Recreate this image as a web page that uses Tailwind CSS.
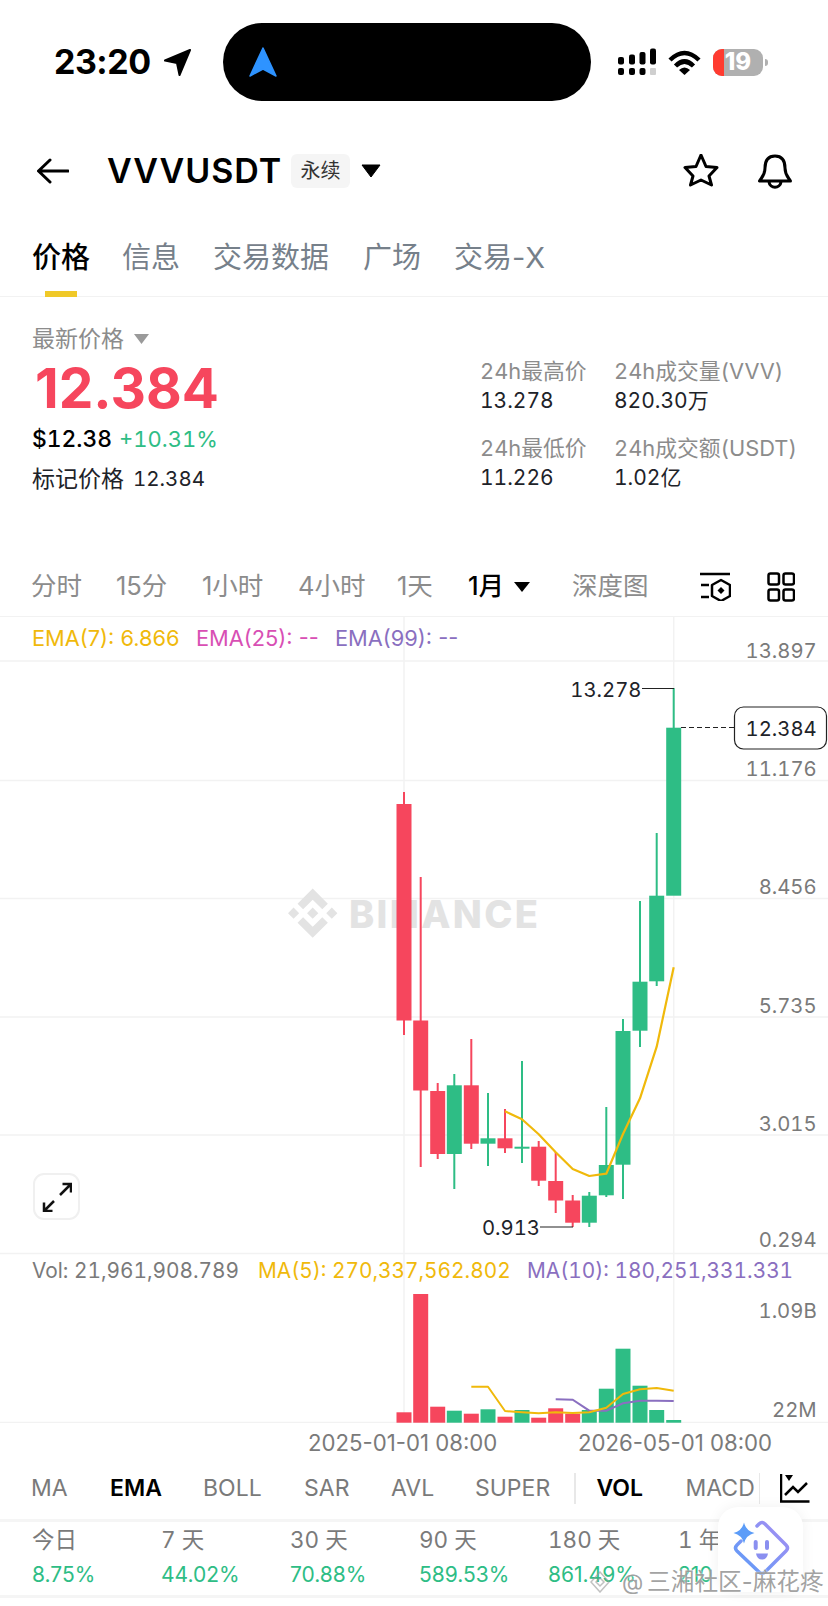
<!DOCTYPE html>
<html lang="zh">

<head>
    <meta charset="UTF-8">
    <meta name="viewport" content="width=device-width, initial-scale=1.0">
    <title>VVVUSDT</title>
    <script src="https://cdn.jsdelivr.net/npm/@tailwindcss/browser@4"></script>
</head>

<body class="bg-white text-[#1e2329] font-[Inter,'Noto_Sans_CJK_SC',sans-serif]">
<div class="relative w-[828px] h-[1606px] overflow-hidden bg-white">

    <!-- Status bar -->
    <div class="flex items-center h-[78px] mt-[23px] pl-[54px] text-black">
        <span class="w-[110px] text-[34px] leading-none font-bold tracking-[-0.5px]">23:20</span>
        <svg class="w-[27px] h-[27px]" viewBox="164 49 27 27" fill="currentColor" stroke="currentColor" stroke-width="2" stroke-linejoin="round"><path d="M190 50 L165 60.5 L177 63 L179.5 75 Z"/></svg>
        <div class="ml-[32px] w-[368px] h-[78px] rounded-[39px] bg-black flex items-center pl-[26px]">
            <svg class="w-[28px] h-[30px]" viewBox="249 46 28 30" fill="#2e93ff" stroke="#2e93ff" stroke-width="1.5" stroke-linejoin="round"><path d="M263 47 L250 75 L263 68 L276 75 Z"/></svg>
        </div>
        <svg class="ml-[27px] w-[38px] h-[28px]" viewBox="618 48 38 28">
            <rect x="618" y="57" width="6" height="7.5" rx="2"/><rect x="629" y="54.5" width="6" height="10" rx="2"/><rect x="639.5" y="52" width="6" height="12.5" rx="2"/><rect x="650" y="48.5" width="6" height="16" rx="2"/>
            <rect x="618" y="68" width="6" height="7" rx="2"/><rect x="629" y="68" width="6" height="7" rx="2"/><rect x="639.5" y="68" width="6" height="7" rx="2"/><rect x="650" y="68" width="6" height="7" rx="1" fill="#cfcfcf"/>
        </svg>
        <svg class="ml-[12px] w-[33px] h-[28px]" viewBox="668 47 33 28" fill="none" stroke="#000" stroke-width="4.5">
            <path d="M670 59 Q684.5 45 699 59"/><path d="M675.5 65 Q684.5 56 693.5 65"/>
            <path d="M679 69 Q684.5 64 690 69 L684.5 74 Z" fill="#000" stroke="none"/>
        </svg>
        <div class="ml-[12px] relative w-[50px] h-[27px] rounded-[9px] bg-[#b0b0b0] overflow-hidden flex items-center justify-center">
            <div class="absolute left-0 top-0 bottom-0 w-[11px] bg-[#ff3b30]"></div>
            <span class="relative text-white text-[24px] leading-none font-extrabold">19</span>
        </div>
        <div class="ml-[2px] w-[3px] h-[7px] rounded-r-full bg-[#b0b0b0]"></div>
    </div>

    <!-- Nav -->
    <div class="flex items-center h-[36px] mt-[52px] pl-[37px]">
        <svg class="w-[32px] h-[26px]" viewBox="37 158 32 26" fill="none" stroke="#000" stroke-width="3" stroke-linecap="round" stroke-linejoin="round"><path d="M68 171 H39 M50 160 L38.5 171 L50 182"/></svg>
        <span class="ml-[38px] w-[184px] text-[34px] leading-none font-semibold tracking-[1px] text-black">VVVUSDT</span>
        <span class="w-[59px] h-[34px] rounded-md bg-[#f5f5f5] text-[20px] leading-[34px] text-center text-[#333]">永续</span>
        <svg class="ml-[11px] w-[20px] h-[14px]" viewBox="0 0 20 14"><path d="M1 1 H19 L10 13 Z" fill="#000" stroke="#000" stroke-linejoin="round"/></svg>
        <svg class="ml-[302px] w-[36px] h-[35px]" viewBox="684 155 36 35" fill="none" stroke="#000" stroke-width="3" stroke-linejoin="round"><path d="M702 156 L707 167.5 L718 168.5 L710 177 L712.5 186 L702 181 L691.5 186 L694 177 L686 168.5 L697 167.5 Z"/></svg>
        <svg class="ml-[38px] w-[36px] h-[36px]" viewBox="757 152 36 36" fill="none" stroke="#000" stroke-width="3" stroke-linejoin="round" stroke-linecap="round"><path d="M775 155 C767 155 765 161 765 167 C765 174 762 176 759.5 180 H790.5 C788 176 785 174 785 167 C785 161 783 155 775 155 Z M769 181 C770 188 780 188 781 181"/></svg>
    </div>

    <!-- Tabs -->
    <div class="flex items-start h-[108px] pt-[51px] pl-[32px] border-b border-[#f2f2f2] text-[29px] leading-[36px] text-[#76808a]">
        <div class="w-[90px] flex flex-col items-start">
            <span class="font-medium text-black">价格</span>
            <div class="ml-[13px] mt-[15px] w-[32px] h-[6px] bg-[#f0c928]"></div>
        </div>
        <span class="w-[91px]">信息</span>
        <span class="w-[150px]">交易数据</span>
        <span class="w-[91px]">广场</span>
        <span>交易-X</span>
    </div>

    <!-- Price info -->
    <div class="flex h-[263px] tabular-nums">
        <div class="w-[480px] pl-[32px] pt-[27px]">
            <div class="flex items-center h-[30px] text-[23px] text-[#8c8c8c]">
                最新价格
                <svg class="ml-[10px] w-[15px] h-[10px]" viewBox="0 0 15 10"><path d="M0 0 H15 L7.5 10 Z" fill="#9a9a9a"/></svg>
            </div>
            <div class="mt-[6px] ml-[3px] h-[56px] text-[55px] leading-[56px] font-bold text-[#f6465d] [font-variant-numeric:normal]">12.384</div>
            <div class="mt-[8px] h-[30px] flex items-center gap-[7px]">
                <span class="text-[22.8px] font-medium text-black">$12.38</span>
                <span class="text-[22px] text-[#2ebd85]">+10.31%</span>
            </div>
            <div class="mt-[10px] h-[30px] flex items-center gap-[9px] text-[23px] text-[#1e2329]">
                <span>标记价格</span><span class="text-[20.5px]">12.384</span>
            </div>
        </div>
        <div class="pt-[59px] grid grid-cols-[134px_1fr] content-start text-[21px] leading-[30px] text-[#1e2329]">
            <span class="text-[21.8px] text-[#8c8c8c]">24h最高价</span><span class="text-[21.8px] text-[#8c8c8c]">24h成交量(VVV)</span>
            <span>13.278</span><span>820.30万</span>
            <span class="mt-[17px] text-[21.8px] text-[#8c8c8c]">24h最低价</span><span class="mt-[17px] text-[21.8px] text-[#8c8c8c]">24h成交额(USDT)</span>
            <span>11.226</span><span>1.02亿</span>
        </div>
    </div>

    <!-- Time frames -->
    <div class="flex items-center h-[57px] pl-[31px] pb-[3px] text-[25.5px] text-[#8c8c8c] border-b border-[#f2f2f2]">
        <span class="w-[85px]">分时</span>
        <span class="w-[86px]">15分</span>
        <span class="w-[96px]">1小时</span>
        <span class="w-[99px]">4小时</span>
        <span class="w-[71px]">1天</span>
        <span class="w-[104px] flex items-center font-medium text-black">1月
            <svg class="ml-[10px] w-[16px] h-[10px]" viewBox="0 0 16 10"><path d="M0 0 H16 L8 10 Z" fill="#000"/></svg>
        </span>
        <span class="w-[128px]">深度图</span>
        <svg class="w-[31px] h-[29px] mr-[36px]" viewBox="699 572 31 29" fill="none" stroke="#000" stroke-width="2.5">
            <path d="M699 574 H729 M700 585 H708 M700 597 H708"/>
            <path d="M720 580 L729 585 V596 L720 601 L711 596 V585 Z" stroke-linejoin="round"/>
            <path d="M720 587 L723.5 590.5 L720 594 L716.5 590.5 Z" fill="#000" stroke="none"/>
        </svg>
        <svg class="w-[28px] h-[30px]" viewBox="765.5 570.5 28 30" fill="none" stroke="#000" stroke-width="2.5">
            <rect x="767" y="572" width="10.5" height="11" rx="2"/><rect x="782" y="572" width="10.5" height="11" rx="2"/>
            <rect x="767" y="588" width="10.5" height="11" rx="2"/><rect x="782" y="588" width="10.5" height="11" rx="2"/>
        </svg>
    </div>

    <!-- Chart -->
    <div class="relative h-[806px]">
        <svg class="absolute left-0 top-0 w-[828px] h-[806px] tabular-nums" viewBox="0 617 828 806">
            <g stroke="#f2f2f2" stroke-width="1.5">
                <path d="M0 661 H828 M0 780.5 H828 M0 898.5 H828 M0 1017 H828 M0 1135 H828 M0 1253.5 H828 M0 1422.5 H828"/>
                <path d="M404 617 V1423 M673.7 617 V1423"/>
            </g>

            <!-- watermark -->
            <g fill="#e3e3e3">
                <g transform="translate(288 888.5) scale(.39)">
                    <path d="M38.73 53.2l24.59-24.58 24.6 24.6 14.3-14.31L63.32 0 24.43 38.89z"/>
                    <path d="M0 63.31l14.3-14.31 14.31 14.31-14.31 14.3z"/>
                    <path d="M38.73 73.41l24.59 24.59 24.6-24.6 14.31 14.29-38.9 38.91-38.91-38.88z"/>
                    <path d="M98 63.31l14.3-14.31 14.31 14.31-14.31 14.3z"/>
                    <path d="M77.83 63.3L63.32 48.78 52.59 59.51l-1.24 1.23-2.54 2.54 14.51 14.5 14.51-14.47z"/>
                </g>
                <text x="349" y="928" font-size="38" font-weight="800" textLength="189">BINANCE</text>
            </g>

            <!-- candles -->
            <g fill="#f6465d">
                <rect x="403" y="792" width="2" height="243"/><rect x="396.5" y="804" width="15" height="216.5"/>
                <rect x="419.7" y="877" width="2" height="290"/><rect x="413.2" y="1020.5" width="15" height="70"/>
                <rect x="436.7" y="1083" width="2" height="76"/><rect x="430.2" y="1091" width="15" height="63"/>
                <rect x="470.3" y="1039" width="2" height="110"/><rect x="463.8" y="1085.3" width="15" height="58.4"/>
                <rect x="504" y="1109" width="2" height="44"/><rect x="497.5" y="1138.3" width="15" height="10"/>
                <rect x="537.7" y="1141" width="2" height="45"/><rect x="531.2" y="1146.7" width="15" height="34"/>
                <rect x="554.7" y="1152" width="2" height="61"/><rect x="548.2" y="1181" width="15" height="19.5"/>
                <rect x="571.7" y="1195" width="2" height="32"/><rect x="565.2" y="1200.5" width="15" height="22.2"/>
            </g>
            <g fill="#2ebd85">
                <rect x="453.3" y="1074" width="2" height="115"/><rect x="446.8" y="1085.3" width="15" height="68.7"/>
                <rect x="487" y="1093" width="2" height="73"/><rect x="480.5" y="1138.3" width="15" height="5.4"/>
                <rect x="521" y="1061" width="2" height="102"/><rect x="514.5" y="1146.7" width="15" height="2"/>
                <rect x="588.3" y="1192" width="2" height="35"/><rect x="581.8" y="1195.7" width="15" height="27"/>
                <rect x="605.3" y="1107" width="2" height="90"/><rect x="598.8" y="1165" width="15" height="30.3"/>
                <rect x="622" y="1019" width="2" height="180"/><rect x="615.5" y="1031" width="15" height="133.7"/>
                <rect x="639" y="901" width="2" height="146"/><rect x="632.5" y="981.7" width="15" height="49"/>
                <rect x="655.7" y="833" width="2" height="153"/><rect x="649.2" y="895.7" width="15" height="85.6"/>
                <rect x="672.7" y="688" width="2" height="40"/><rect x="666.2" y="727.7" width="15" height="168"/>
            </g>

            <!-- EMA(7) -->
            <polyline fill="none" stroke="#f0b90b" stroke-width="2.2" stroke-linejoin="round" points="505,1111.3 522,1119.3 538.7,1134.3 555.7,1152.3 572.7,1169 589.3,1176 606.3,1173.7 623,1134 640,1098.3 656.7,1046.7 673.7,967.3"/>

            <!-- high, low and last price -->
            <path d="M642 688.5 H674 M540 1227 H573" fill="none" stroke="#222" stroke-width="1.2"/>
            <path d="M681 727.5 H734" fill="none" stroke="#222" stroke-width="1.2" stroke-dasharray="5 3"/>
            <rect x="734.5" y="707" width="92" height="42" rx="9" fill="#fff" stroke="#222" stroke-width="1.2"/>
            <g font-size="20.3" fill="#1e2329">
                <text x="641.5" y="696.7" text-anchor="end">13.278</text>
                <text x="540" y="1235" text-anchor="end">0.913</text>
                <text x="816.7" y="736" text-anchor="end">12.384</text>
            </g>

            <!-- axis labels -->
            <g font-size="20.3" fill="#7a7a7a" text-anchor="end">
                <text x="816.7" y="658">13.897</text>
                <text x="816.7" y="776">11.176</text>
                <text x="816.7" y="894">8.456</text>
                <text x="816.7" y="1012.7">5.735</text>
                <text x="816.7" y="1131">3.015</text>
                <text x="816.7" y="1247">0.294</text>
                <text x="816.7" y="1318">1.09B</text>
                <text x="816.7" y="1416.7">22M</text>
            </g>

            <!-- volume -->
            <g fill="#f6465d">
                <rect x="396.5" y="1412.3" width="15" height="10.4"/>
                <rect x="413.2" y="1294" width="15" height="128.7"/>
                <rect x="430.2" y="1406.7" width="15" height="16"/>
                <rect x="463.8" y="1413.7" width="15" height="9"/>
                <rect x="497.5" y="1416.7" width="15" height="6"/>
                <rect x="531.2" y="1417.7" width="15" height="5"/>
                <rect x="548.2" y="1408.3" width="15" height="14.4"/>
                <rect x="565.2" y="1413.7" width="15" height="9"/>
            </g>
            <g fill="#2ebd85">
                <rect x="446.8" y="1410.7" width="15" height="12"/>
                <rect x="480.5" y="1409.3" width="15" height="13.4"/>
                <rect x="514.5" y="1410" width="15" height="12.7"/>
                <rect x="581.8" y="1410" width="15" height="12.7"/>
                <rect x="598.8" y="1388.7" width="15" height="34"/>
                <rect x="615.5" y="1348.7" width="15" height="74"/>
                <rect x="632.5" y="1385.7" width="15" height="37"/>
                <rect x="649.2" y="1410" width="15" height="12.7"/>
                <rect x="666.2" y="1420" width="15" height="2.7"/>
            </g>
            <polyline fill="none" stroke="#8a6fc0" stroke-width="2" points="555.7,1399.3 572.7,1399.7 589.3,1410.7 606.3,1410.7 623,1403.3 640,1400.7 656.7,1400.7 673.7,1401"/>
            <polyline fill="none" stroke="#f0b90b" stroke-width="2" stroke-linejoin="round" points="471.3,1386.7 488,1386.7 505,1411 522,1412.3 538.7,1413.3 555.7,1412.3 572.7,1413 589.3,1412.3 606.3,1407.7 623,1394 640,1389.3 656.7,1388 673.7,1390.7"/>
        </svg>

        <div class="relative flex items-center h-[42px] pl-[32px] text-[21.8px]">
            <span class="w-[164px] text-[#f0b90b]">EMA(7): 6.866</span>
            <span class="w-[139px] text-[#d84fb4]">EMA(25): --</span>
            <span class="text-[#8a6fc0]">EMA(99): --</span>
        </div>
        <div class="h-[591px]"></div>
        <div class="relative flex items-center h-[42px] pl-[32px] text-[20.8px] tabular-nums">
            <span class="w-[226px] text-[#7a7a7a]">Vol: 21,961,908.789</span>
            <span class="w-[269px] text-[#f0b90b]">MA(5): 270,337,562.802</span>
            <span class="text-[#8a6fc0]">MA(10): 180,251,331.331</span>
        </div>

        <!-- expand -->
        <div class="absolute left-[33px] top-[556px] w-[47px] h-[47px] rounded-[11px] bg-white border-2 border-[#f0f0f0] flex items-center justify-center">
            <svg class="w-[30px] h-[30px]" viewBox="42 1181 30 30" fill="none" stroke="#111" stroke-width="2.5"><path d="M60 1194 L70.5 1183.5 M62.5 1183 H71 V1191.5 M54 1200 L44.5 1209.5 M44 1201.5 V1210 H52.5"/></svg>
        </div>
    </div>

    <!-- Dates -->
    <div class="flex items-center h-[40px] pl-[308px] text-[22.2px] text-[#7a7a7a]">
        <span class="w-[270px]">2025-01-01 08:00</span>
        <span>2026-05-01 08:00</span>
    </div>

    <!-- Indicators -->
    <div class="flex items-center h-[50px] mb-[6px] pl-[31px] text-[23px] text-[#7a7a7a]">
        <span class="w-[79px]">MA</span>
        <span class="w-[93px] font-semibold text-black">EMA</span>
        <span class="w-[101px]">BOLL</span>
        <span class="w-[87px]">SAR</span>
        <span class="w-[84px]">AVL</span>
        <span class="w-[99px]">SUPER</span>
        <div class="w-[1.5px] h-[31px] bg-[#e8e8e8] mr-[21px]"></div>
        <span class="w-[89px] font-semibold text-black">VOL</span>
        <span class="w-[73px]">MACD</span>
        <div class="w-[1.5px] h-[31px] bg-[#e8e8e8] mr-[20px]"></div>
        <svg class="w-[30px] h-[30px]" viewBox="780 1473 30 30" fill="none" stroke="#000" stroke-width="2.5">
            <path d="M781 1474 V1501.5 H809.5"/>
            <path d="M785 1495 L793 1487 L798 1492 L807 1483"/>
            <path d="M785 1475 H793 L789 1481 Z" fill="#000" stroke="none"/>
        </svg>
    </div>

    <!-- Returns -->
    <div class="grid grid-cols-[129px_129px_129px_129px_130px_1fr] h-[79px] pl-[32px] border-t-[3px] border-b-[3px] border-[#f5f5f5] leading-[35px]">
        <div class="flex flex-col text-[22.5px] text-[#7a7a7a]"><span class="tabular-nums">今日</span><span class="text-[21px] text-[#2ebd85]">8.75%</span></div>
        <div class="flex flex-col text-[22.5px] text-[#7a7a7a]"><span class="tabular-nums">7 天</span><span class="text-[21px] text-[#2ebd85]">44.02%</span></div>
        <div class="flex flex-col text-[22.5px] text-[#7a7a7a]"><span class="tabular-nums">30 天</span><span class="text-[21px] text-[#2ebd85]">70.88%</span></div>
        <div class="flex flex-col text-[22.5px] text-[#7a7a7a]"><span class="tabular-nums">90 天</span><span class="text-[21px] text-[#2ebd85]">589.53%</span></div>
        <div class="flex flex-col text-[22.5px] text-[#7a7a7a]"><span class="tabular-nums">180 天</span><span class="text-[21px] text-[#2ebd85]">861.49%</span></div>
        <div class="flex flex-col text-[22.5px] text-[#7a7a7a]"><span class="tabular-nums">1 年</span><span class="text-[21px] text-[#2ebd85]">210</span></div>
    </div>

    <!-- Floating assistant -->
    <div class="absolute left-[718px] top-[1507px] w-[85px] h-[85px] rounded-[20px] bg-white shadow-[0_0_14px_rgba(0,0,0,0.06)]">
        <svg class="w-[85px] h-[85px]" viewBox="718 1507 85 85" fill="none">
            <defs>
                <linearGradient id="aiGrad" x1="0" y1="1" x2="1" y2="0">
                    <stop offset="0" stop-color="#5b9cf8"/><stop offset="1" stop-color="#a78df2"/>
                </linearGradient>
            </defs>
            <path d="M757 1526 L759 1524 Q762 1521 765 1524 L786 1545 Q789 1548 786 1551 L765 1572 Q762 1575 759 1572 L737 1551 Q734 1548 737 1545 L741 1541" stroke="url(#aiGrad)" stroke-width="3.5" stroke-linecap="round"/>
            <path d="M744 1522.5 Q746 1531 754.5 1533 Q746 1535 744 1543.5 Q742 1535 733.5 1533 Q742 1531 744 1522.5 Z" fill="#5b9cf8"/>
            <rect x="753.7" y="1540" width="4" height="10" rx="2" fill="#8a8ff0"/>
            <rect x="765" y="1540" width="4" height="10" rx="2" fill="#8a8ff0"/>
            <path d="M756 1553.5 H768 Q767 1559.5 762 1559.5 Q757 1559.5 756 1553.5 Z" fill="#8a8ff0"/>
        </svg>
    </div>

    <!-- Repost watermark -->
    <div class="absolute left-[590px] top-[1569px] flex items-center h-[26px] text-[23.7px] leading-none text-[#8a8a8a]/80 [text-shadow:0_0_2px_#fff]">
        <svg class="w-[20px] h-[22px] opacity-60" viewBox="0 0 20 22" fill="none" stroke="#999" stroke-width="1.5"><path d="M10 1 L19 11 L10 21 L1 11 Z M10 7 L14 11 L10 15 L6 11 Z"/></svg>
        <span class="ml-[12px] w-[25px] text-[22px]">@</span>
        <span>三湘社区-麻花疼</span>
    </div>

</div>
</body>
</html>
